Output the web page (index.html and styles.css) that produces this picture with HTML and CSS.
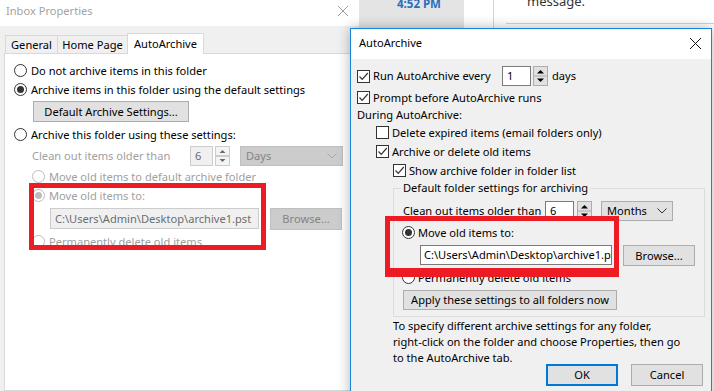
FILE: index.html
```html
<!DOCTYPE html>
<html>
<head>
<meta charset="utf-8">
<title>AutoArchive</title>
<link rel="stylesheet" href="styles.css">
</head>
<body>
<div class="ol">
  <div class="ol-time">4:52 PM</div>
  <div class="ol-gap"></div>
  <div class="ol-read"><div class="ol-msg">message.</div></div>
</div>

<div class="props">
  <div class="props-title">
    <span>Inbox Properties</span>
    <svg class="xicon" width="10" height="10" viewBox="0 0 10 10"><path d="M0 0L10 10M10 0L0 10" stroke="#9a9a9a" stroke-width="1" fill="none"/></svg>
  </div>
  <div class="props-body">
    <div class="tabs">
      <div class="tab tab-gen">General</div>
      <div class="tab tab-home">Home Page</div>
      <div class="tab tab-aa active">AutoArchive</div>
    </div>
    <div class="panel">
      <div class="opt"><span class="radio"></span>Do not archive items in this folder</div>
      <div class="opt"><span class="radio on"></span>Archive items in this folder using the default settings</div>
      <div class="btn b-defarch">Default Archive Settings...</div>
      <div class="opt l-r3"><span class="radio"></span>Archive this folder using these settings:</div>
      <div class="l-clean dis">
        <span class="lbl-clean">Clean out items older than</span>
        <span class="field fdis f-num6">6</span>
        <svg class="spin spin-l" width="15" height="20" viewBox="0 0 15 20"><rect x=".5" y=".5" width="14" height="9" fill="#f4f4f4" stroke="#cccccc"/><rect x=".5" y="10.5" width="14" height="9" fill="#f4f4f4" stroke="#cccccc"/><path d="M4.5 7L7.5 4L10.5 7Z" fill="#6a6a6a"/><path d="M4.5 13L7.5 16L10.5 13Z" fill="#6a6a6a"/></svg>
        <span class="select sdis s-days">Days<svg width="10" height="6" viewBox="0 0 10 6"><path d="M.5 .5L5 5L9.5 .5" stroke="#a8a8a8" fill="none"/></svg></span>
      </div>
      <div class="opt dis l-r5"><span class="radio rdis"></span>Move old items to default archive folder</div>
      <div class="opt dis l-r6"><span class="radio rdis on"></span>Move old items to:</div>
      <div class="l-path">
        <span class="field fdis f-path-l">C:\Users\Admin\Desktop\archive1.pst</span>
        <span class="btn bdis b-browse-l">Browse...</span>
      </div>
      <div class="opt dis l-r7"><span class="radio rdis"></span>Permanently delete old items</div>
      <div class="redbox red-l"></div>
    </div>
  </div>
</div>

<div class="aa">
  <div class="aa-title">
    <span>AutoArchive</span>
    <svg class="xicon" width="11" height="11" viewBox="0 0 11 11"><path d="M0 0L11 11M11 0L0 11" stroke="#111" stroke-width="1" fill="none"/></svg>
  </div>
  <div class="aa-body">
    <div class="copt r-run">
      <span class="chk"><svg width="11" height="11" viewBox="0 0 11 11"><path d="M1.5 5.5L4.2 8.3L9.8 2" stroke="#333" stroke-width="1.2" fill="none"/></svg></span>
      <span class="lbl-run">Run AutoArchive every</span>
      <span class="field f-run">1</span>
      <svg class="spin spin-run" width="15" height="20" viewBox="0 0 15 20"><rect x=".5" y=".5" width="14" height="19" fill="#e1e1e1" stroke="#adadad"/><path d="M.5 10H14.5" stroke="#adadad"/><path d="M4 7.5L7.5 4L11 7.5Z" fill="#000"/><path d="M4 12.5L7.5 16L11 12.5Z" fill="#000"/></svg>
      <span class="days">days</span>
    </div>
    <div class="copt r-prompt">
      <span class="chk"><svg width="11" height="11" viewBox="0 0 11 11"><path d="M1.5 5.5L4.2 8.3L9.8 2" stroke="#333" stroke-width="1.2" fill="none"/></svg></span>
      Prompt before AutoArchive runs
    </div>
    <div class="r-during">During AutoArchive:</div>
    <div class="copt r-ind1">
      <span class="chk"></span>
      Delete expired items (email folders only)
    </div>
    <div class="copt r-ind1">
      <span class="chk"><svg width="11" height="11" viewBox="0 0 11 11"><path d="M1.5 5.5L4.2 8.3L9.8 2" stroke="#333" stroke-width="1.2" fill="none"/></svg></span>
      Archive or delete old items
    </div>
    <div class="copt r-ind2">
      <span class="chk"><svg width="11" height="11" viewBox="0 0 11 11"><path d="M1.5 5.5L4.2 8.3L9.8 2" stroke="#333" stroke-width="1.2" fill="none"/></svg></span>
      Show archive folder in folder list
    </div>
    <fieldset class="grp">
      <legend>Default folder settings for archiving</legend>
      <div class="grp-in">
        <div class="g-clean">
          <span class="lbl-gclean">Clean out items older than</span>
          <span class="field f-g6">6</span>
          <svg class="spin spin-g" width="15" height="20" viewBox="0 0 15 20"><rect x=".5" y=".5" width="14" height="19" fill="#e1e1e1" stroke="#adadad"/><path d="M.5 10H14.5" stroke="#adadad"/><path d="M4 7.5L7.5 4L11 7.5Z" fill="#000"/><path d="M4 12.5L7.5 16L11 12.5Z" fill="#000"/></svg>
          <span class="select s-months">Months<svg width="10" height="6" viewBox="0 0 10 6"><path d="M.5 .5L5 5L9.5 .5" stroke="#333" fill="none"/></svg></span>
        </div>
        <div class="opt g-radio g-r1"><span class="radio on"></span>Move old items to:</div>
        <div class="g-path">
          <span class="field f-path-r">C:\Users\Admin\Desktop\archive1.pst</span>
          <span class="btn b-browse-r">Browse...</span>
        </div>
        <div class="opt g-radio g-r2"><span class="radio"></span>Permanently delete old items</div>
        <div class="btn b-apply">Apply these settings to all folders now</div>
      </div>
    </fieldset>
    <p class="note">To specify different archive settings for any folder,<br>right-click on the folder and choose Properties, then go<br>to the AutoArchive tab.</p>
    <div class="dlg-btns">
      <div class="btn b-ok">OK</div>
      <div class="btn b-cancel">Cancel</div>
    </div>
  </div>
  <div class="redbox red-r"></div>
</div>
</body>
</html>
```

FILE: styles.css
```css
* { box-sizing: border-box; margin: 0; padding: 0; }
html, body { width: 714px; height: 391px; overflow: hidden; }
body {
  position: relative;
  background: #fff;
  font-family: "Noto Sans", "Open Sans", sans-serif;
  font-size: 11.1px;
  line-height: 1;
  color: #000;
}

/* Outlook background */
.ol { position: absolute; left: 359px; top: 0; right: 0; height: 28px; display: flex; }
.ol-time { width: 105px; background: #e4e4e4; padding-left: 38px; color: #2a6fbd; font-weight: 700; font-size: 11.5px; line-height: 7px; }
.ol-gap { width: 30px; border-right: 1px solid #d4d4d4; }
.ol-read { flex: 1; padding-left: 12px; }
.ol-msg { height: 24px; border-bottom: 1px solid #d4d4d4; padding-left: 21px; font-size: 13px; line-height: 2px; color: #333; }

/* Inbox Properties window */
.props { position: absolute; left: 0; top: 0; width: 359px; height: 391px; background: #f0f0f0; display: flex; flex-direction: column; }
.props-title { height: 26px; flex: none; background: #fff; display: flex; align-items: center; justify-content: space-between; padding: 0 11px 4px 6px; color: #a3a3a3; }
.xicon { display: block; flex: none; }
.props-body { flex: 1; display: flex; flex-direction: column; padding: 7px 0 0 4px; }
.tabs { display: flex; align-items: flex-end; height: 20px; padding-left: 1px; flex: none; }
.tab { height: 18px; border: 1px solid #d9d9d9; border-bottom: 0; background: #f0f0f0; display: flex; align-items: center; justify-content: center; margin-right: -1px; white-space: nowrap; }
.tab-gen { width: 53px; }
.tab-home { width: 71px; }
.tab-aa { width: 77px; }
.tab.active { height: 21px; background: #fff; margin-bottom: -1px; position: relative; z-index: 1; }
.panel { flex: 1; background: #fff; border: 1px solid #d9d9d9; margin-right: -20px; padding: 7px 0 0 9px; position: relative; display: flex; flex-direction: column; align-items: flex-start; }

/* Generic controls */
.opt { display: flex; align-items: center; height: 19px; gap: 4px; white-space: nowrap; }
.radio { flex: none; width: 13px; height: 13px; border: 1px solid #333; border-radius: 50%; background: #fff; display: flex; align-items: center; justify-content: center; }
.radio.on::after { content: ""; width: 7px; height: 7px; border-radius: 50%; background: #333; }
.radio.rdis { border-color: #bcbcbc; }
.radio.rdis.on::after { background: #bcbcbc; }
.dis { color: #a0a0a0; }
.btn { display: flex; align-items: center; justify-content: center; background: #e1e1e1; border: 1px solid #adadad; height: 21px; white-space: nowrap; flex: none; }
.btn.bdis { background: #cccccc; border-color: #bfbfbf; color: #838383; }
.field { flex: none; display: flex; align-items: center; background: #fff; border: 1px solid #7a7a7a; padding-left: 4px; white-space: nowrap; overflow: hidden; }
.field.fdis { background: #f0f0f0; border-color: #cccccc; color: #6d6d6d; }
.select { flex: none; display: flex; align-items: center; justify-content: space-between; height: 20px; padding: 0 5px; background: #e1e1e1; border: 1px solid #adadad; }
.select.sdis { background: #cccccc; border-color: #bfbfbf; color: #838383; }
.select svg { display: block; }
.spin { display: block; flex: none; }
.chk { flex: none; width: 13px; height: 13px; border: 1px solid #333; background: #fff; display: flex; align-items: center; justify-content: center; }
.chk svg { display: block; }

/* Left panel rows */
.b-defarch { margin: 2px 0 0 19px; width: 156px; }
.l-r3 { margin-top: 3px; }
.l-clean { display: flex; align-items: center; height: 20px; margin: 2px 0 0 18px; }
.lbl-clean { width: 158px; flex: none; white-space: nowrap; }
.f-num6 { width: 23px; height: 20px; }
.spin-l { margin-left: 2px; }
.s-days { width: 103px; margin-left: 10px; }
.l-r5 { margin: 1px 0 0 18px; }
.l-r6 { margin-left: 18px; }
.l-path { display: flex; align-items: flex-start; margin: 3px 0 0 36px; }
.f-path-l { width: 209px; height: 21px; }
.b-browse-l { width: 72px; height: 22px; margin-left: 11px; }
.l-r7 { margin: 2px 0 0 18px; }

.redbox { position: absolute; border: 5px solid #ed1c24; z-index: 3; pointer-events: none; }
.red-l { left: 24px; top: 129px; width: 237px; height: 67px; }

/* AutoArchive dialog */
.aa { position: absolute; left: 350px; top: 28px; width: 362px; height: 380px; border: 1px solid #1a85d8; background: #f0f0f0; box-shadow: 0 0 12px rgba(0,0,0,.3); display: flex; flex-direction: column; z-index: 5; }
.aa-title { height: 30px; flex: none; background: #fff; display: flex; align-items: center; justify-content: space-between; padding: 0 10px 2px 8px; }
.aa-body { flex: 1; display: flex; flex-direction: column; align-items: flex-start; padding: 7px 6px 0 6px; }
.copt { display: flex; align-items: center; gap: 3px; height: 19px; white-space: nowrap; }
.r-run { height: 20px; }
.lbl-run { width: 126px; flex: none; }
.f-run { width: 29px; height: 20px; }
.spin-run { margin-left: -1px; }
.days { margin-left: 1px; }
.r-prompt { margin-top: 2px; }
.r-during { height: 16px; display: flex; align-items: center; }
.r-ind1 { margin-left: 19px; }
.r-ind2 { margin-left: 36px; }

.grp { border: 1px solid #dcdcdc; margin-left: 36px; align-self: stretch; padding: 0 0 6px 9px; min-width: 0; }
.grp legend { padding: 0 2px; margin-left: -2px; line-height: 16px; height: 16px; white-space: nowrap; }
.grp-in { display: flex; flex-direction: column; align-items: flex-start; }
.g-clean { display: flex; align-items: center; height: 20px; margin-top: 5px; }
.lbl-gclean { width: 142px; flex: none; white-space: nowrap; }
.f-g6 { width: 29px; height: 20px; }
.spin-g { margin-left: 3px; }
.s-months { width: 72px; margin-left: 9px; }
.g-radio { gap: 3px; margin-left: -1px; }
.g-r1 { margin-top: 2px; }
.g-path { display: flex; align-items: flex-start; margin: 3px 0 0 17px; }
.f-path-r { width: 192px; height: 20px; padding-left: 3px; }
.b-browse-r { width: 72px; margin-left: 11px; }
.g-r2 { margin-top: 2px; }
.b-apply { width: 214px; height: 20px; margin-top: 3px; }

.note { margin: 1px 0 0 36px; line-height: 16px; white-space: nowrap; }
.dlg-btns { align-self: stretch; display: flex; justify-content: flex-end; gap: 13px; margin: -2px 2px 0 0; }
.b-ok, .b-cancel { width: 72px; height: 22px; }
.b-ok { border: 2px solid #0078d7; }

.red-r { left: 34px; top: 187px; width: 234px; height: 61px; border-bottom-width: 9px; }
```
